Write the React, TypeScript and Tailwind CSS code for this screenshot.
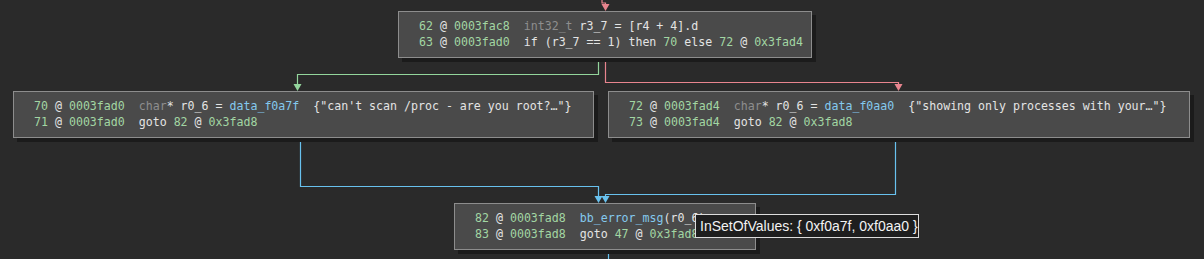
const G = "text-[#a2d6a3]"
const W = "text-[#e4e4e4]"
const T = "text-[#8e8e8e]"
const C = "text-[#84c9ee]"

function Node({ left, top, width, lines }: { left: number; top: number; width: number; lines: React.ReactNode[] }) {
  return (
    <div className="absolute" style={{ left, top, width }}>
      <div className="absolute left-[4px] top-[4px] w-full h-full bg-[#1b1b1b]" />
      <div className="relative h-[47px] bg-[#4a4a4a] border border-[#8d8d8d] pl-[20px] pt-[6px] whitespace-pre font-['DejaVu_Sans_Mono',monospace] text-[11.6px] leading-[16px]">
        {lines.map((l, i) => (
          <div key={i}>{l}</div>
        ))}
      </div>
    </div>
  )
}

function Addr({ n, a }: { n: string; a: string }) {
  return (
    <>
      <span className={G}>{n}</span>
      <span className={W}> @ </span>
      <span className={G}>{a}</span>
      <span>{"  "}</span>
    </>
  )
}

function Arrow({ x, y, color }: { x: number; y: number; color: string }) {
  return <polygon points={`${x - 4},${y - 7} ${x + 4},${y - 7} ${x},${y}`} fill={color} />
}

export default function App() {
  const green = "#93d59c"
  const pink = "#e8848e"
  const blue = "#68c1ee"
  return (
    <div className="relative w-[1204px] h-[259px] bg-[#2a2a2a] overflow-hidden">
      <svg className="absolute left-0 top-0" width={1204} height={259}>
        <polyline points="602,0 602,3 605.5,3 605.5,8" fill="none" stroke={pink} strokeWidth={1.2} />
        <Arrow x={605.5} y={11} color={pink} />
        <polyline points="598.5,58 598.5,74.5 297.5,74.5 297.5,86" fill="none" stroke={green} strokeWidth={1.2} />
        <Arrow x={297.5} y={91} color={green} />
        <polyline points="605.5,58 605.5,82.5 898.5,82.5 898.5,86" fill="none" stroke={pink} strokeWidth={1.2} />
        <Arrow x={898.5} y={91} color={pink} />
        <polyline points="300.5,138 300.5,186.5 598.5,186.5 598.5,198" fill="none" stroke={blue} strokeWidth={1.2} />
        <Arrow x={598.5} y={203} color={blue} />
        <polyline points="895.5,138 895.5,194.5 605.5,194.5 605.5,198" fill="none" stroke={blue} strokeWidth={1.2} />
        <Arrow x={605.5} y={203} color={blue} />
        <line x1={608.5} y1={250} x2={608.5} y2={259} stroke={blue} strokeWidth={1.2} />
      </svg>

      <Node
        left={398}
        top={11}
        width={414}
        lines={[
          <>
            <Addr n="62" a="0003fac8" />
            <span className={T}>int32_t</span>
            <span className={W}> r3_7 = [r4 + 4].d</span>
          </>,
          <>
            <Addr n="63" a="0003fad0" />
            <span className={W}>if (r3_7 == 1) then </span>
            <span className={G}>70</span>
            <span className={W}> else </span>
            <span className={G}>72</span>
            <span className={W}> @ </span>
            <span className={G}>0x3fad4</span>
          </>,
        ]}
      />

      <Node
        left={13}
        top={91}
        width={581}
        lines={[
          <>
            <Addr n="70" a="0003fad0" />
            <span className={T}>char</span>
            <span className={W}>* r0_6 = </span>
            <span className={C}>data_f0a7f</span>
            <span className={W}>{"  {\"can't scan /proc - are you root?…\"}"}</span>
          </>,
          <>
            <Addr n="71" a="0003fad0" />
            <span className={W}>goto </span>
            <span className={G}>82</span>
            <span className={W}> @ </span>
            <span className={G}>0x3fad8</span>
          </>,
        ]}
      />

      <Node
        left={608}
        top={91}
        width={582}
        lines={[
          <>
            <Addr n="72" a="0003fad4" />
            <span className={T}>char</span>
            <span className={W}>* r0_6 = </span>
            <span className={C}>data_f0aa0</span>
            <span className={W}>{"  {\"showing only processes with your…\"}"}</span>
          </>,
          <>
            <Addr n="73" a="0003fad4" />
            <span className={W}>goto </span>
            <span className={G}>82</span>
            <span className={W}> @ </span>
            <span className={G}>0x3fad8</span>
          </>,
        ]}
      />

      <Node
        left={454}
        top={203}
        width={302}
        lines={[
          <>
            <Addr n="82" a="0003fad8" />
            <span className={C}>bb_error_msg</span>
            <span className={W}>(r0_6)</span>
          </>,
          <>
            <Addr n="83" a="0003fad8" />
            <span className={W}>goto </span>
            <span className={G}>47</span>
            <span className={W}> @ </span>
            <span className={G}>0x3fad8</span>
          </>,
        ]}
      />

      <div className="absolute left-[695px] top-[214px] h-[24px] w-[224px] bg-[#1e1e1e] border border-[#dcdcdc] pl-[4px] flex items-center font-['Liberation_Sans',Arial,sans-serif] text-[14px] text-[#f2f2f2] whitespace-pre">
        {"InSetOfValues: { 0xf0a7f, 0xf0aa0 }"}
      </div>
    </div>
  )
}
